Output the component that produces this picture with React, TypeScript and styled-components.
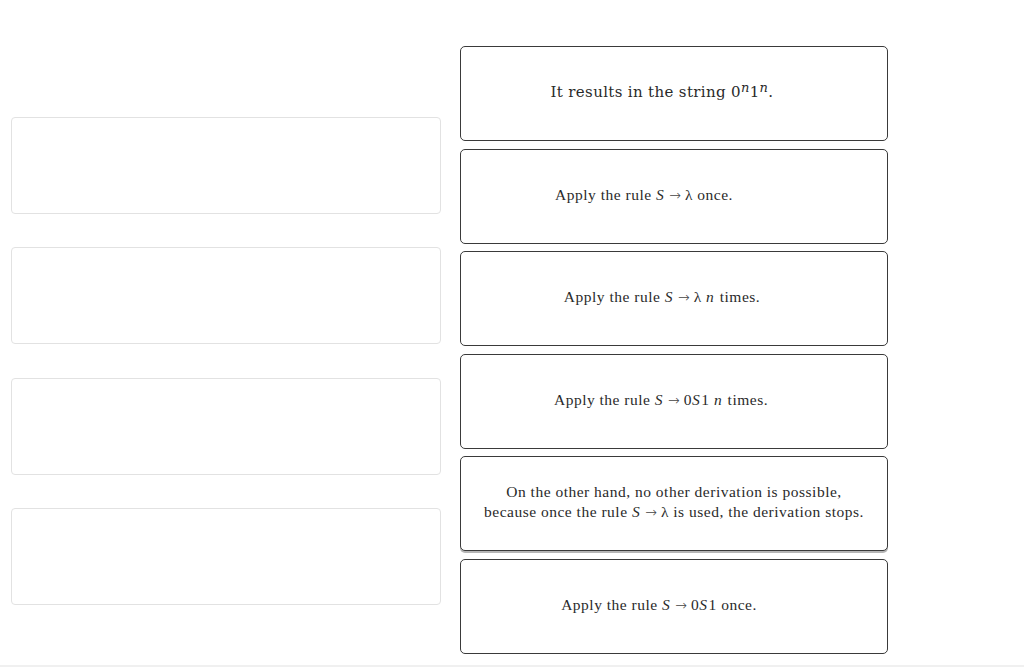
import React from 'react';
import styled, { createGlobalStyle } from 'styled-components';

const GlobalStyle = createGlobalStyle`
  html, body {
    margin: 0;
    padding: 0;
    background: #ffffff;
  }
  body {
    font-family: 'Liberation Serif', serif;
  }
`;

const Page = styled.div`
  width: 1024px;
  height: 667px;
  box-sizing: border-box;
  border-bottom: 2px solid #f0f0f0;
  display: flex;
  align-items: flex-start;
  padding: 46px 0 0 11px;
  gap: 19px;
  overflow: hidden;
`;

const DropColumn = styled.div`
  width: 430px;
  display: flex;
  flex-direction: column;
  gap: 33.3px;
  padding-top: 71px;
`;

const DropZone = styled.div`
  height: 97px;
  box-sizing: border-box;
  border: 1px solid #e2e2e2;
  border-radius: 4px;
  background: #fff;
`;

const CardColumn = styled.div`
  width: 428px;
  display: flex;
  flex-direction: column;
  gap: 7.6px;
`;

// the answer images in the source sit a little left of centre, by an amount per card
const Card = styled.div<ICard>`
  height: 95px;
  box-sizing: border-box;
  border: 1px solid #3a3a3a;
  border-radius: 5px;
  background: #fff;
  display: flex;
  align-items: center;
  justify-content: center;
  text-align: center;
  padding: 0 ${p => 10 + 2 * (p.shift || 0)}px 3px 10px;
  box-shadow: ${p => (p.raised ? '0 2px 0 #b5b5b5' : 'none')};
`;

const PlainText = styled.div`
  font-family: 'DejaVu Serif', serif;
  font-size: 15px;
  color: #2a2a2a;
  letter-spacing: 0.35px;
  sup {
    font-style: italic;
    font-size: 13px;
    line-height: 0;
    vertical-align: 5px;
  }
`;

const MathText = styled.div`
  font-family: 'Liberation Serif', serif;
  font-size: 15.5px;
  line-height: 20px;
  color: #2a2a2a;
  letter-spacing: 0.5px;
`;

const Var = styled.i`
  font-style: italic;
  padding-right: 1px;
`;

const Arrow = styled.span`
  font-family: 'DejaVu Sans', sans-serif;
  font-size: 14px;
  font-weight: 300;
  color: #444;
  letter-spacing: 0;
  padding: 0 4px;
`;

const Rule = ({ rhs }: { rhs: React.ReactNode }) => (
  <>
    <Var>S</Var>
    <Arrow>→</Arrow>
    {rhs}
  </>
);

const ZeroSOne = () => (
  <>
    0<Var>S</Var>1
  </>
);

const cards = [
  {
    key: 'result',
    plain: true,
    shift: 12,
    content: (
      <>
        It results in the string 0<sup>n</sup>1<sup>n</sup>.
      </>
    ),
  },
  {
    key: 'lambda-once',
    shift: 30,
    content: (
      <>
        Apply the rule <Rule rhs="λ" /> once.
      </>
    ),
  },
  {
    key: 'lambda-n',
    shift: 12,
    content: (
      <>
        Apply the rule <Rule rhs="λ" /> <Var>n</Var> times.
      </>
    ),
  },
  {
    key: 'zs1-n',
    shift: 13,
    content: (
      <>
        Apply the rule <Rule rhs={<ZeroSOne />} /> <Var>n</Var> times.
      </>
    ),
  },
  {
    key: 'other',
    raised: true,
    shift: 0,
    content: (
      <>
        On the other hand, no other derivation is possible,
        <br />
        because once the rule <Rule rhs="λ" /> is used, the derivation stops.
      </>
    ),
  },
  {
    key: 'zs1-once',
    shift: 15,
    content: (
      <>
        Apply the rule <Rule rhs={<ZeroSOne />} /> once.
      </>
    ),
  },
];

const App = () => {
  return (
    <>
      <GlobalStyle />
      <Page>
        <DropColumn>
          {[0, 1, 2, 3].map(i => (
            <DropZone key={i} />
          ))}
        </DropColumn>
        <CardColumn>
          {cards.map(card => (
            <Card key={card.key} raised={card.raised} shift={card.shift}>
              {card.plain ? <PlainText>{card.content}</PlainText> : <MathText>{card.content}</MathText>}
            </Card>
          ))}
        </CardColumn>
      </Page>
    </>
  );
};

interface ICard {
  raised?: boolean;
  shift?: number;
}

export default App;
